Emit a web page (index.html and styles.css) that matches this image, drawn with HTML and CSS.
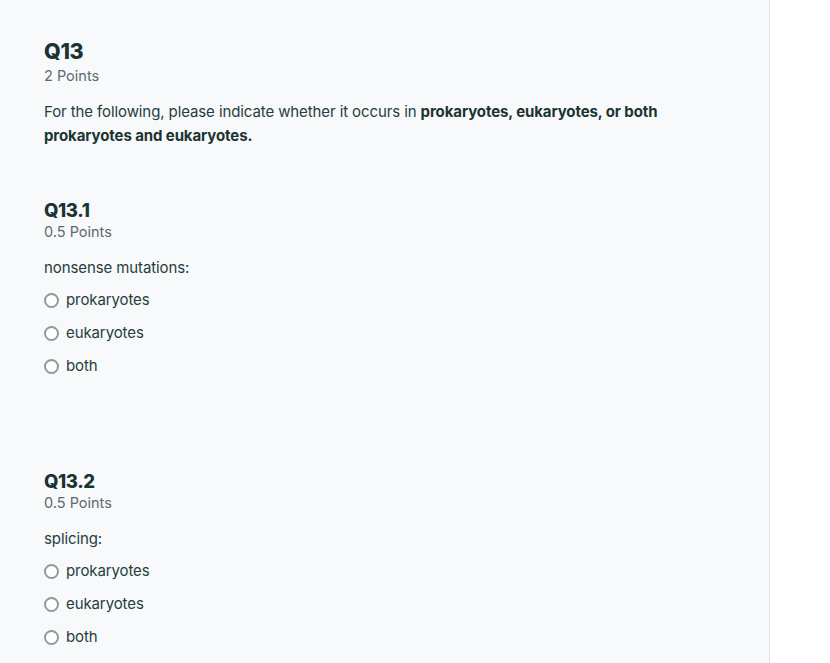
FILE: index.html
```html
<!DOCTYPE html>
<html>
<head>
<meta charset="utf-8">
<link rel="stylesheet" href="styles.css">
</head>
<body>
<div class="page">
  <main class="panel">
    <section class="question">
      <h2 class="qtitle">Q13</h2>
      <div class="points">2 Points</div>
      <p class="prompt">For the following, please indicate whether it occurs in <strong>prokaryotes, eukaryotes, or both prokaryotes and eukaryotes.</strong></p>
    </section>
    <section class="sub">
      <h3 class="qtitle">Q13.1</h3>
      <div class="points">0.5 Points</div>
      <p class="stem">nonsense mutations:</p>
      <ul class="options">
        <li class="option"><span class="radio"></span>prokaryotes</li>
        <li class="option"><span class="radio"></span>eukaryotes</li>
        <li class="option"><span class="radio"></span>both</li>
      </ul>
    </section>
    <section class="sub sub2">
      <h3 class="qtitle">Q13.2</h3>
      <div class="points">0.5 Points</div>
      <p class="stem">splicing:</p>
      <ul class="options">
        <li class="option"><span class="radio"></span>prokaryotes</li>
        <li class="option"><span class="radio"></span>eukaryotes</li>
        <li class="option"><span class="radio"></span>both</li>
      </ul>
    </section>
  </main>
  <aside class="side"></aside>
</div>
</body>
</html>
```
FILE: styles.css
```css
html, body {
  margin: 0;
  padding: 0;
  height: 100%;
  overflow: hidden;
}
body {
  font-family: Inter, Lato, sans-serif;
  color: #1f3a37;
  background: #ffffff;
}
.page {
  display: flex;
  height: 100%;
}
.panel {
  width: 770px;
  flex: none;
  background: #f8f9fb;
  border-right: 1px solid #dfe5ea;
  padding: 38px 44px 0 44px;
  box-sizing: border-box;
}
.side {
  flex: 1;
  background: #ffffff;
}
.qtitle {
  margin: 0;
  font-size: 21.5px;
  font-weight: 800;
  line-height: 26px;
  color: #1b3431;
  letter-spacing: -0.4px;
}
.sub .qtitle {
  font-size: 18.5px;
  line-height: 22px;
}
.points {
  margin-top: 2px;
  font-size: 14.5px;
  line-height: 20px;
  color: #5b6b6b;
}
.sub .points {
  margin-top: 1px;
}
.prompt {
  margin: 14px 0 0 0;
  font-size: 15px;
  line-height: 24px;
  width: 640px;
  color: #263d3b;
  letter-spacing: -0.1px;
}
.prompt strong {
  font-weight: 700;
  color: #1b3431;
}
.sub {
  margin-top: 51px;
}
.sub2 {
  margin-top: 92px;
}
.stem {
  margin: 14px 0 0 0;
  font-size: 15px;
  line-height: 24px;
  color: #263d3b;
  letter-spacing: -0.1px;
}
.options {
  list-style: none;
  margin: 8px 0 0 0;
  padding: 0;
  display: flex;
  flex-direction: column;
  gap: 9px;
}
.option {
  display: flex;
  align-items: center;
  gap: 7px;
  font-size: 15px;
  line-height: 24px;
  color: #263d3b;
  letter-spacing: -0.1px;
}
.radio {
  width: 11px;
  height: 11px;
  border: 2px solid #8d9c9b;
  border-radius: 50%;
  background: #fff;
  flex: none;
}
```
